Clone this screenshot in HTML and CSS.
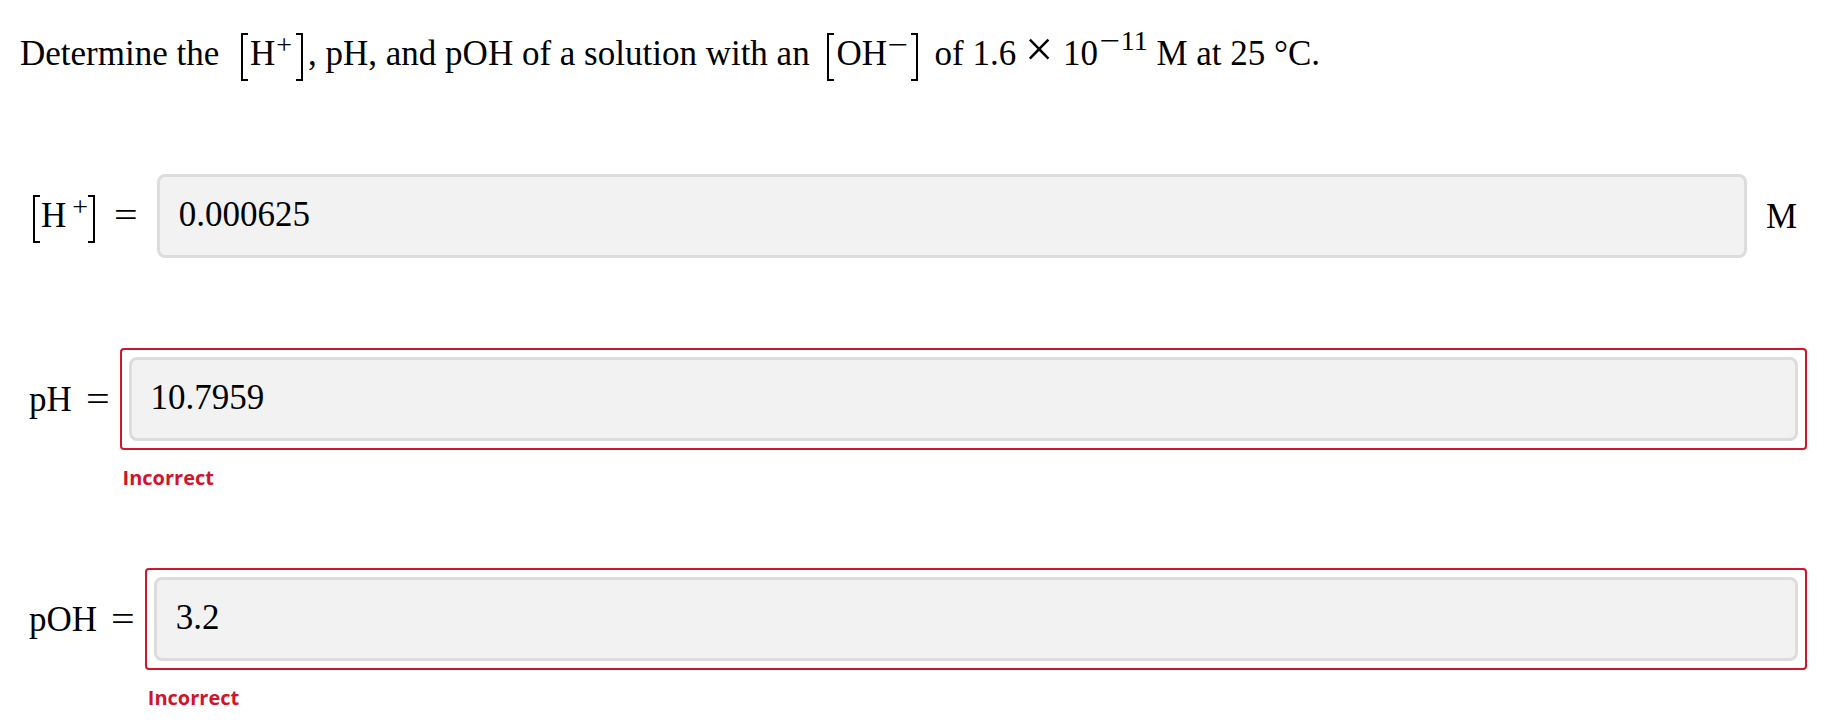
FILE: index.html
```html
<!DOCTYPE html>
<html lang="en">
<head>
<meta charset="utf-8">
<title>Determine [H+], pH, and pOH</title>
<link rel="stylesheet" href="styles.css">
</head>
<body>
<div class="page">
  <p class="title">Determine the <span class="m m-h"><span class="br l"></span>H<sup>+</sup><span class="br r"></span></span>, pH, and pOH of a solution with an <span class="m m-oh"><span class="br l"></span>OH<sup class="neg">−</sup><span class="br r"></span></span> of 1.6 <span class="times">×</span> 10<sup class="exp"><span class="minus">−</span>11</sup> M at 25 °C.</p>

  <div class="row">
    <div class="label"><span class="br l"></span>H<sup class="lsup">+</sup><span class="br r"></span><span class="eq eq-wide">=</span></div>
    <div class="wrap">
      <div class="field">0.000625</div>
    </div>
    <div class="unit">M</div>
  </div>

  <div class="row">
    <div class="label">pH<span class="eq">=</span></div>
    <div class="wrap incorrect">
      <div class="field">10.7959</div>
    </div>
    <div class="feedback">Incorrect</div>
  </div>

  <div class="row">
    <div class="label">pOH<span class="eq">=</span></div>
    <div class="wrap incorrect">
      <div class="field">3.2</div>
    </div>
    <div class="feedback">Incorrect</div>
  </div>
</div>
</body>
</html>
```

FILE: styles.css
```css
html, body {
  margin: 0;
  padding: 0;
  background: #ffffff;
}

body {
  font-family: "Liberation Serif", "Times New Roman", serif;
  color: #000000;
}

.page {
  padding: 30px 37px 0 20px;
}

.title {
  margin: 0 0 84px;
  font-size: 35px;
  line-height: 48px;
  white-space: nowrap;
}

.title .m-h {
  margin: 0 5px 0 13px;
}

.title .m-oh {
  margin: 0 8px 0 9px;
}

.title .br.l {
  margin-right: 2px;
}

.title .br.r {
  margin-left: 4px;
}

.times {
  display: inline-block;
  font-size: 50px;
  line-height: 0;
  margin: 0 1px 0 0;
  vertical-align: -1px;
}

sup {
  font-size: 28px;
  line-height: 0;
  vertical-align: 11px;
  margin-left: 1px;
}

sup.exp {
  vertical-align: 15px;
  margin-left: 2px;
}

.minus {
  display: inline-block;
  transform: scaleX(1.3);
  margin: 0 3px 0 2px;
}

.neg {
  display: inline-block;
  transform: scaleX(1.3);
  margin-left: 3px;
  margin-right: 1px;
}

.br {
  display: inline-block;
  box-sizing: border-box;
  width: 7px;
  height: 48px;
  border-style: solid;
  border-color: #000000;
  vertical-align: -16px;
}

.br.l {
  border-width: 2px 0 2px 2px;
}

.br.r {
  border-width: 2px 2px 2px 0;
}

.row {
  display: grid;
  grid-template-columns: auto 1fr auto;
  align-items: center;
  margin-left: 9px;
  margin-bottom: 81px;
}

.row + .row {
  margin-bottom: 0;
}

.row + .row + .row {
  margin-top: 77px;
}

.label {
  grid-column: 1;
  grid-row: 1;
  font-size: 35px;
  line-height: 48px;
  padding-top: 2px;
  white-space: nowrap;
}

.label .br.l {
  margin-left: 4px;
  margin-right: 1px;
}

.label .lsup {
  margin-left: 6px;
}

.eq {
  display: inline-block;
  transform: scaleX(1.2);
  margin-left: 16px;
  margin-right: 12px;
}

.eq.eq-wide {
  margin-left: 21px;
}

.wrap {
  grid-column: 2;
  grid-row: 1;
  border: 2px solid transparent;
  border-radius: 4px;
  padding: 7px;
}

.wrap.incorrect {
  border-color: #d0142c;
}

.field {
  box-sizing: border-box;
  height: 84px;
  border: 3px solid #dcdcdc;
  border-radius: 8px;
  background: #f2f2f2;
  padding: 0 0 3px 19px;
  display: flex;
  align-items: center;
  font-size: 35px;
  line-height: 40px;
}

.unit {
  grid-column: 3;
  grid-row: 1;
  font-size: 35px;
  padding: 2px 10px 0 10px;
}

.feedback {
  grid-column: 2;
  grid-row: 2;
  margin-top: 14px;
  padding-left: 3px;
  font-family: "Open Sans", "Noto Sans", sans-serif;
  font-weight: 700;
  font-size: 20px;
  line-height: 27px;
  color: #d0142c;
}
```
